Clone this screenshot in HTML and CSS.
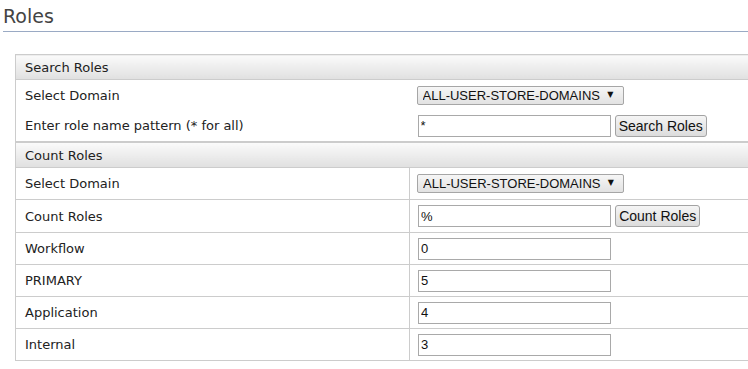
FILE: index.html
```html
<!DOCTYPE html>
<html>
<head>
<meta charset="utf-8">
<link rel="stylesheet" href="styles.css">
</head>
<body>
<h1 class="title">Roles</h1>
<div class="wrap">
<table class="roles">
  <colgroup><col class="c1"><col class="c2"></colgroup>
  <tbody class="search">
    <tr><th colspan="2" class="head">Search Roles</th></tr>
    <tr class="r1">
      <td class="lbl">Select Domain</td>
      <td class="val"><span class="sel"><select><option>ALL-USER-STORE-DOMAINS</option></select><span class="arrow">▼</span></span></td>
    </tr>
    <tr class="r2">
      <td class="lbl">Enter role name pattern (* for all)</td>
      <td class="val"><input class="txt" type="text" value="*"> <button class="btn">Search Roles</button></td>
    </tr>
  </tbody>
  <tbody class="count">
    <tr><th colspan="2" class="head head2">Count Roles</th></tr>
    <tr>
      <td class="lbl">Select Domain</td>
      <td class="val"><span class="sel"><select><option>ALL-USER-STORE-DOMAINS</option></select><span class="arrow">▼</span></span></td>
    </tr>
    <tr class="tall">
      <td class="lbl">Count Roles</td>
      <td class="val"><input class="txt" type="text" value="%"> <button class="btn">Count Roles</button></td>
    </tr>
    <tr><td class="lbl">Workflow</td><td class="val"><input class="txt" type="text" value="0"></td></tr>
    <tr><td class="lbl">PRIMARY</td><td class="val"><input class="txt" type="text" value="5"></td></tr>
    <tr><td class="lbl">Application</td><td class="val"><input class="txt" type="text" value="4"></td></tr>
    <tr><td class="lbl">Internal</td><td class="val"><input class="txt" type="text" value="3"></td></tr>
  </tbody>
</table>
</div>
</body>
</html>
```
FILE: styles.css
```css
html, body { margin: 0; padding: 0; overflow: hidden; background: #fff; }
body { font-family: "DejaVu Sans", sans-serif; font-size: 13px; color: #222; }
.title {
  margin: 0 0 0 3px;
  padding: 5px 0 3px 0;
  font-size: 19px;
  font-weight: normal;
  color: #444;
  line-height: 23px;
  border-bottom: 1px solid #9aaac4;
}
.wrap { padding: 22px 0 0 15px; }
.roles {
  border-collapse: collapse;
  width: 745px;
  border-left: 1px solid #ccc;
  border-top: 1px solid #ccc;
}
.c1 { width: 394px; }
.head {
  text-align: left;
  font-weight: normal;
  height: 24px;
  padding: 0 0 0 9px;
  background: linear-gradient(#fafafa, #e0e0e0);
  border-bottom: 1px solid #ccc;
  color: #222;
}
.head2 { border-top: 2px solid #ccc; height: 24px; }
.lbl { padding: 0 0 0 9px; }
.val { padding: 0 0 0 8px; }
.search .r1 td { height: 30px; }
.search .r2 td { height: 31px; }
.count td { height: 31px; border-bottom: 1px solid #ccc; }
.count .tall td { height: 32px; }
.count .lbl { border-right: 1px solid #ccc; }
.sel { position: relative; display: inline-block; vertical-align: middle; }
.sel select {
  appearance: none;
  -webkit-appearance: none;
  width: 207px;
  height: 19px;
  margin: 0 0 0 -1px;
  padding: 0 0 0 5px;
  border: 1px solid #a6a6a6;
  border-radius: 2px;
  background: linear-gradient(#f6f6f6, #e2e2e2);
  font-family: "Liberation Sans", Arial, sans-serif;
  font-size: 13px;
  color: #111;
  line-height: 17px;
}
.sel .arrow {
  position: absolute;
  right: 10px;
  top: 4px;
  font-family: "DejaVu Sans", sans-serif;
  font-size: 8px;
  line-height: 10px;
  color: #111;
  pointer-events: none;
}
.txt {
  box-sizing: border-box;
  width: 193px;
  height: 22px;
  margin: 0;
  padding: 0 2px;
  border: 1px solid #a9a9a9;
  border-radius: 0;
  font-family: "Liberation Sans", Arial, sans-serif;
  font-size: 13px;
  color: #111;
  vertical-align: middle;
}
.btn {
  box-sizing: border-box;
  height: 22px;
  margin: 0;
  padding: 0 3px;
  border: 1px solid #a3a3a3;
  border-radius: 3px;
  background: linear-gradient(#f5f5f5, #dcdcdc);
  font-family: "Liberation Sans", Arial, sans-serif;
  font-size: 14px;
  color: #111;
  vertical-align: middle;
}
```
